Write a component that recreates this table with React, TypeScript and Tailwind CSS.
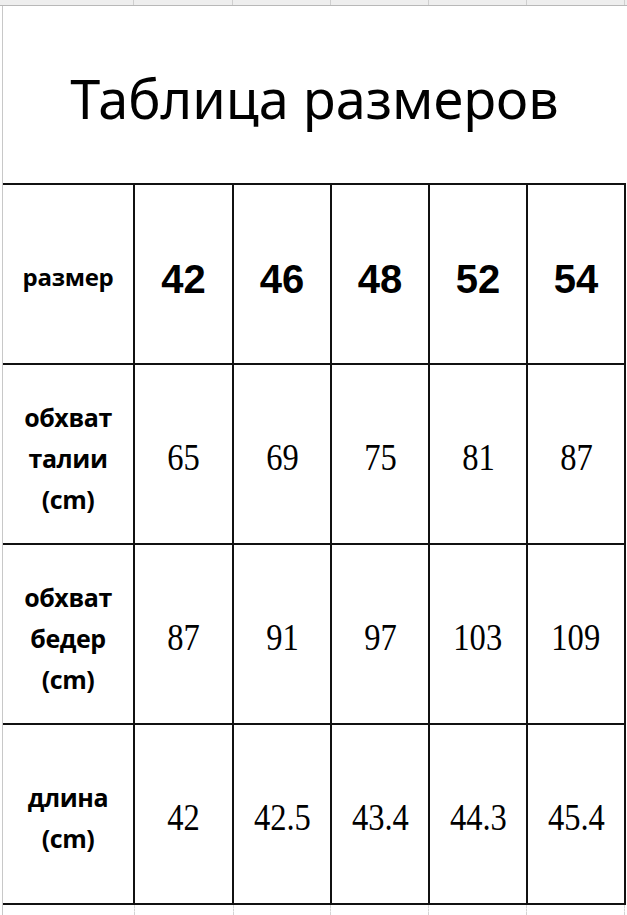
const sizes = ['42', '46', '48', '52', '54']

const rows = [
  { label: ['обхват', 'талии', '(cm)'], values: ['65', '69', '75', '81', '87'] },
  { label: ['обхват', 'бедер', '(cm)'], values: ['87', '91', '97', '103', '109'] },
  { label: ['длина', '(cm)'], values: ['42', '42.5', '43.4', '44.3', '45.4'] },
]

const colWidths = ['w-[132px]', 'w-[99px]', 'w-[98px]', 'w-[98px]', 'w-[98px]', 'w-[98px]']

export default function App() {
  return (
    <div className="w-[627px] h-[915px] bg-white overflow-hidden">
      {/* sheet column headers, cut off at the top */}
      <div className="h-[6px] flex bg-[#eeeeee] border-b border-[#b8b8b8]">
        <div className="w-[2px]" />
        {colWidths.map((w, i) => (
          <div key={i} className={`${w} border-r border-[#cfcfcf]`} />
        ))}
      </div>

      <div className="ml-[2px] border-l border-[#c8c8c8] w-[623px]">
        <div className="grid grid-cols-[132px_99px_98px_98px_98px_98px] w-[623px]">
          <div className="col-span-6 h-[179px] border-b-2 border-[#111] flex items-center justify-center pt-[8px]">
            <h1 className="text-[54px] text-black font-normal tracking-[0px] font-['Noto_Sans',sans-serif]">
              Таблица размеров
            </h1>
          </div>

          <div className="h-[180px] border-r-2 border-b-2 border-[#111] flex items-center justify-center pt-[6px]">
            <span className="text-[24px] font-bold text-black font-['Open_Sans',sans-serif] tracking-[-0.3px]">размер</span>
          </div>
          {sizes.map((s) => (
            <div key={s} className="h-[180px] border-r-2 border-b-2 border-[#111] flex items-center justify-center pt-[10px]">
              <span className="text-[40px] font-bold text-black font-['Liberation_Sans',Arial,sans-serif]">{s}</span>
            </div>
          ))}

          {rows.map((r, ri) => (
            <Row key={ri} label={r.label} values={r.values} />
          ))}
        </div>

        <div className="h-[10px] flex">
          {colWidths.map((w, i) => (
            <div key={i} className={`${w} border-r border-dashed border-[#d4d4d4]`} />
          ))}
        </div>
      </div>
    </div>
  )
}

function Row({ label, values }: { label: string[]; values: string[] }) {
  return (
    <>
      <div className="h-[180px] border-r-2 border-b-2 border-[#111] flex flex-col items-center justify-center pt-[8px]">
        {label.map((l, i) => (
          <span key={i} className="text-[25px] leading-[41px] font-bold text-black font-['Open_Sans',sans-serif] tracking-[-0.4px]">
            {l}
          </span>
        ))}
      </div>
      {values.map((v, i) => (
        <div key={i} className="h-[180px] border-r-2 border-b-2 border-[#111] flex items-center justify-center pt-[8px]">
          <span className="inline-block scale-x-[0.88] text-[37px] text-black font-['Liberation_Serif','Times_New_Roman',serif]">{v}</span>
        </div>
      ))}
    </>
  )
}
